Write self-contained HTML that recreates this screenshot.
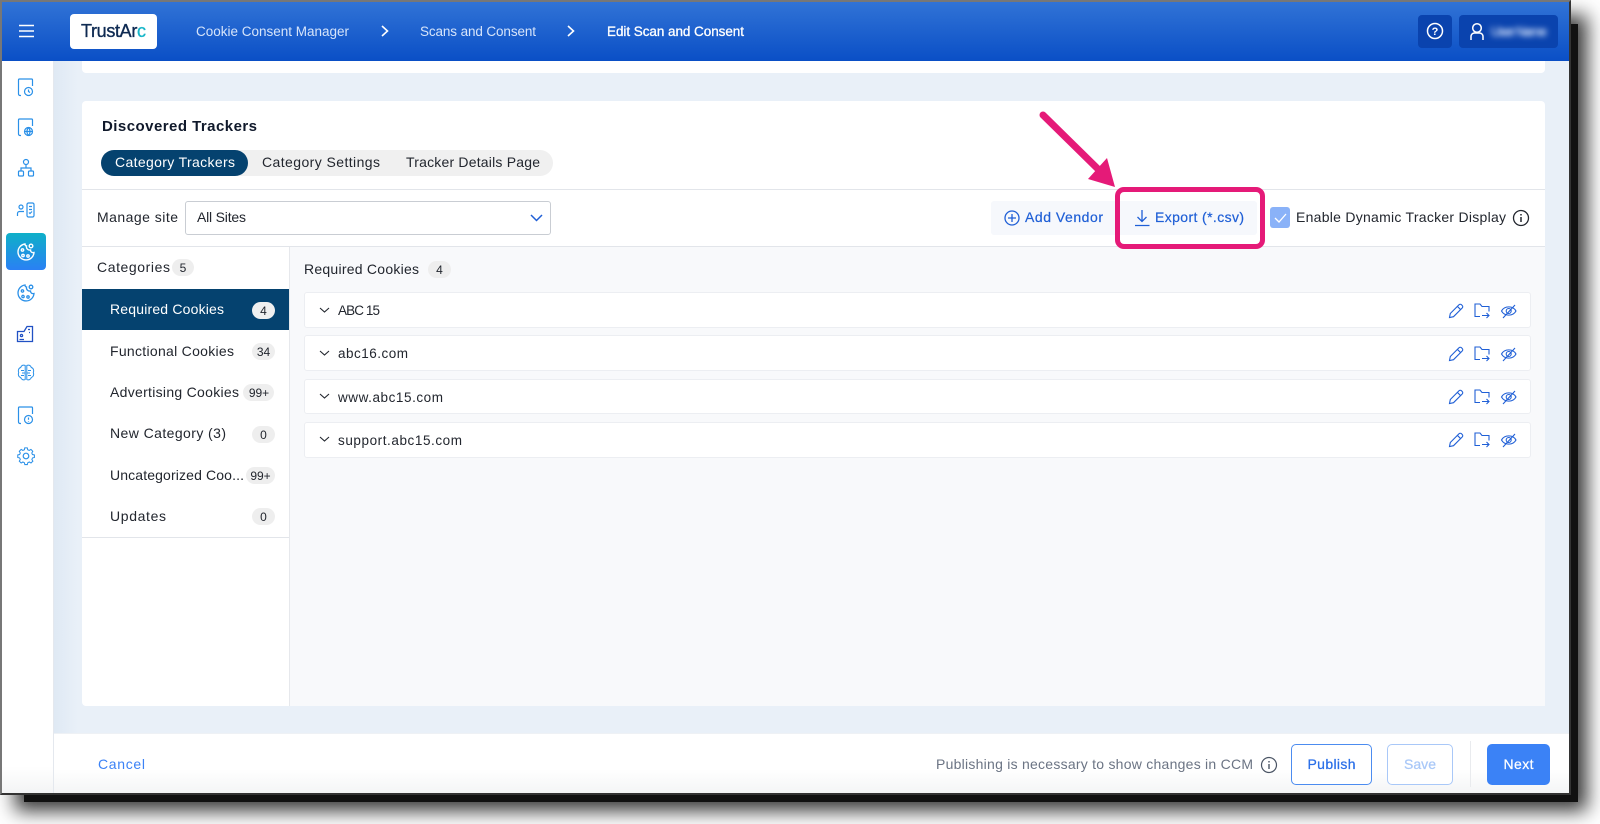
<!DOCTYPE html>
<html lang="en">
<head>
<meta charset="utf-8">
<title>Edit Scan and Consent</title>
<style>
html,body{margin:0;padding:0;background:#fff;width:1600px;height:824px;overflow:hidden}
div{position:absolute;box-sizing:border-box}
svg{position:absolute;left:0;top:0}
svg text{font-family:"Liberation Sans",sans-serif;font-size:14px;fill:#22262e}
.w{fill:#fff}
.b{fill:#1f5fd6}
.card{background:#fff;border-radius:4px}
.row{left:304px;width:1227px;background:#fff;border:1px solid #eceef2;border-radius:3px}
.pill{background:#eeeeee;border-radius:9px}
</style>
</head>
<body>
<div style="left:24px;top:24px;width:1554px;height:778px;background:#111;box-shadow:0 0 18px 9px rgba(0,0,0,.78)"></div>
<div id="win" style="left:0;top:0;width:1571px;height:795px;background:#e9f0f8;border:2px solid #777;border-right-color:#333;border-bottom-color:#333;overflow:hidden">
</div>
<div style="left:2px;top:2px;width:1567px;height:59px;background:linear-gradient(#3173d6,#0a4fc6)"></div>
<div style="left:2px;top:61px;width:52px;height:732px;background:#fff;border-right:1px solid #e4e8ee"></div>
<div style="left:54px;top:61px;width:24px;height:672px;background:linear-gradient(90deg,#dfe9f4,#e9f0f8)"></div>

<div style="left:70px;top:14px;width:87px;height:35px;background:#fff;border-radius:4px"></div>
<div style="left:1418px;top:15px;width:34px;height:33px;background:#0a43ae;border-radius:4px"></div>
<div style="left:1459px;top:15px;width:99px;height:33px;background:#0a43ae;border-radius:4px"></div>

<div style="left:6px;top:233px;width:40px;height:37px;border-radius:4px;background:linear-gradient(#0fb0c8,#2a80f4)"></div>

<div class="card" style="left:82px;top:61px;width:1463px;height:12px;border-radius:0 0 4px 4px"></div>
<div class="card" style="left:82px;top:101px;width:1463px;height:605px"></div>
<div style="left:101px;top:150px;width:452px;height:26px;background:#f0f0f0;border-radius:13px"></div>
<div style="left:101px;top:150px;width:147px;height:26px;background:#05426f;border-radius:13px"></div>
<div style="left:82px;top:189px;width:1463px;height:1px;background:#e2e5ea"></div>
<div style="left:185px;top:201px;width:366px;height:34px;background:#fff;border:1px solid #c9cdd3;border-radius:3px"></div>
<div style="left:991px;top:201px;width:266px;height:34px;background:#f6f8fc;border-radius:3px"></div>
<div style="left:1270px;top:207px;width:20px;height:21px;background:#8ab2f8;border-radius:3px"></div>
<div style="left:82px;top:246px;width:1463px;height:1px;background:#e2e5ea"></div>
<div style="left:290px;top:247px;width:1255px;height:459px;background:#f8f9fb"></div>
<div style="left:289px;top:247px;width:1px;height:459px;background:#e6e8ec"></div>
<div style="left:82px;top:289px;width:207px;height:41px;background:#05426f"></div>
<div style="left:82px;top:537px;width:207px;height:1px;background:#e2e5ea"></div>

<div class="pill" style="left:172px;top:259px;width:22px;height:17px"></div>
<div class="pill" style="left:252px;top:302px;width:23px;height:17px;background:#f0f0f0"></div>
<div class="pill" style="left:252px;top:343px;width:23px;height:17px"></div>
<div class="pill" style="left:243px;top:384px;width:31px;height:17px"></div>
<div class="pill" style="left:252px;top:426px;width:23px;height:17px"></div>
<div class="pill" style="left:246px;top:467px;width:29px;height:17px"></div>
<div class="pill" style="left:252px;top:508px;width:23px;height:17px"></div>
<div class="pill" style="left:428px;top:261px;width:23px;height:17px"></div>

<div class="row" style="top:292px;height:36px"></div>
<div class="row" style="top:335px;height:36px"></div>
<div class="row" style="top:379px;height:35px"></div>
<div class="row" style="top:422px;height:36px"></div>

<div style="left:54px;top:733px;width:1515px;height:60px;background:linear-gradient(#fff 60%,#f4f5f6);border-top:1px solid #eef1f5"></div>
<div style="left:2px;top:740px;width:52px;height:53px;background:linear-gradient(#fff 50%,#f3f4f5);border-right:1px solid #e4e8ee"></div>
<div style="left:1291px;top:744px;width:81px;height:41px;background:#fff;border:1px solid #4c8cf0;border-radius:5px"></div>
<div style="left:1387px;top:744px;width:66px;height:41px;background:#fff;border:1px solid #a9c8f8;border-radius:5px"></div>
<div style="left:1470px;top:741px;width:1px;height:46px;background:#e9ebee"></div>
<div style="left:1487px;top:744px;width:63px;height:41px;background:#3b82f6;border-radius:5px"></div>
<div style="left:1115px;top:187px;width:150px;height:62px;border:5px solid #e51a78;border-radius:9px"></div>

<svg width="1600" height="824" viewBox="0 0 1600 824" xmlns="http://www.w3.org/2000/svg">
<defs>
<filter id="bl" x="-20%" y="-100%" width="140%" height="300%"><feGaussianBlur stdDeviation="2.800"/></filter>
</defs>

<!-- hamburger -->
<path d="M19 25.500h15M19 31h15M19 36.500h15" stroke="#fff" stroke-width="1.500" fill="none"/>

<!-- logo -->
<text x="81" y="37" style="font-size:18px;fill:#0e2a52;stroke:#0e2a52;stroke-width:.35" textLength="65" lengthAdjust="spacing">Trust<tspan>Ar</tspan><tspan style="fill:#17b6c9;stroke:#17b6c9">c</tspan></text>

<!-- breadcrumb -->
<text x="196" y="36" style="font-size:13.500px;fill:#d6e4fa" textLength="153" lengthAdjust="spacing">Cookie Consent Manager</text>
<path d="M382 26l5.500 5-5.500 5" stroke="#fff" stroke-width="1.600" fill="none"/>
<text x="420" y="36" style="font-size:13.500px;fill:#d6e4fa" textLength="116" lengthAdjust="spacing">Scans and Consent</text>
<path d="M568 26l5.500 5-5.500 5" stroke="#fff" stroke-width="1.600" fill="none"/>
<text x="607" y="36" style="font-size:13.500px;fill:#fff;stroke:#fff;stroke-width:.3" textLength="137" lengthAdjust="spacing">Edit Scan and Consent</text>

<!-- help -->
<circle cx="1435" cy="31" r="7.500" fill="none" stroke="#fff" stroke-width="1.500"/>
<text x="1435" y="35" text-anchor="middle" style="font-size:11px;font-weight:bold;fill:#fff">?</text>
<!-- user -->
<circle cx="1477" cy="28" r="4.300" fill="none" stroke="#fff" stroke-width="1.500"/>
<path d="M1471 40v-3.500a3.500 3.500 0 0 1 3.500-3.500h5a3.500 3.500 0 0 1 3.500 3.500V40" fill="none" stroke="#fff" stroke-width="1.500"/>
<text x="1491" y="36" filter="url(#bl)" style="font-size:13px;fill:#c4d6f6;stroke:#c4d6f6;stroke-width:.5" textLength="56" lengthAdjust="spacing">User Name</text>

<!-- sidebar icons -->
<g fill="none" stroke="#2a90e8" stroke-width="1.200">
<g transform="translate(26 87)"><path d="M-5 8.500h-1a1.500 1.500 0 0 1-1.500-1.500V-7a1 1 0 0 1 1-1H5.500a1 1 0 0 1 1 1V-1"/><circle cx="2.500" cy="4.500" r="4"/><path d="M2.500 2.500v2l1.500 1"/></g>
<g transform="translate(26 127)"><path d="M-5 8.500h-1a1.500 1.500 0 0 1-1.500-1.500V-7a1 1 0 0 1 1-1H5.500a1 1 0 0 1 1 1V-1"/><circle cx="2.500" cy="4.500" r="4"/><path d="M-1.500 4.500h8M2.500 .5c-2 2.500-2 5.500 0 8M2.500 .5c2 2.500 2 5.500 0 8"/></g>
<g transform="translate(26 168)"><circle cx="0" cy="-6" r="2.500"/><path d="M0-3.500V0M-5 3V0H5V3"/><rect x="-7.500" y="3" width="5" height="5" rx="1"/><rect x="2.500" y="3" width="5" height="5" rx="1"/></g>
<g transform="translate(26 210)"><circle cx="-5" cy="-3" r="2"/><path d="M-8.500 6V3.500a2 2 0 0 1 2-2H-2"/><rect x="1" y="-7" width="7" height="14" rx="1.500"/><path d="M3-3.500h3M3-.5h3M3 2.500l1 1 2-2"/></g>
<g transform="translate(26 252)" stroke="#fff" stroke-width="1.400"><path d="M-1-8a8 8 0 1 0 9 8.500c-2 .5-3.500-.5-3.500-2.500-2.500 .5-4.500-1.500-4-4-1 0-1.500-1-1.500-2z"/><circle cx="-3.500" cy="-2" r="1.200"/><circle cx="-3" cy="3.500" r="1.200"/><circle cx="2" cy="4" r="1.200"/><circle cx="5" cy="-6" r="1.800"/></g>
<g transform="translate(26 293)" stroke-width="1.300"><path d="M-1-8a8 8 0 1 0 9 8.500c-2 .5-3.500-.5-3.500-2.500-2.500 .5-4.500-1.500-4-4-1 0-1.500-1-1.500-2z"/><circle cx="-3.500" cy="-2" r="1.200"/><circle cx="-3" cy="3.500" r="1.200"/><circle cx="2" cy="4" r="1.200"/><circle cx="5" cy="-6" r="1.800"/></g>
<g transform="translate(25 334)" stroke="#2151c4" stroke-width="1.300"><path d="M-7.500 7.500V-2.500H-1L2-7.500H7.500V7.500Z"/><circle cx="-3.500" cy="1.500" r="1.100"/><path d="M-5.500 5.500h4.500M3-4.500h2M4-1.500h1"/></g>
<g transform="translate(26 373)" stroke-width="1"><path d="M-.8-7.500c-2-1-4 0-4.500 2-2 .5-3 3-2 5-1 2 0 4.500 2 5 .5 2 3 3 4.500 2zM.8-7.500c2-1 4 0 4.500 2 2 .5 3 3 2 5 1 2 0 4.500-2 5-.5 2-3 3-4.500 2z"/><path d="M-5-2.500h3M-5 2.500h3M2-2.500h3M2 2.500h3M-1 0h-3M1 0h3"/></g>
<g transform="translate(26 415)"><path d="M-5 8.500h-1a1.500 1.500 0 0 1-1.500-1.500V-7a1 1 0 0 1 1-1H5.500a1 1 0 0 1 1 1V-1"/><circle cx="2.500" cy="4.500" r="4"/><path d="M2.500 2.500v2.200M2.500 6v.6"/></g>
<g transform="translate(26 456)" stroke-width="1.200"><circle r="2.800"/><path d="M-1.500-8h3l.5 2.200 1.800.8 2-1.200 2.200 2.200-1.200 2 .8 1.800 2.300.5v3l-2.200.5-.8 1.800 1.200 2-2.200 2.200-2-1.200-1.800.8-.5 2.200h-3l-.5-2.200-1.800-.8-2 1.200-2.200-2.200 1.200-2-.8-1.800-2.200-.5v-3l2.200-.5.8-1.800-1.200-2 2.200-2.200 2 1.200 1.800-.8z" transform="translate(0 -1.300) scale(.85)"/></g>
</g>

<!-- title -->
<text x="102" y="131" style="font-size:15px;font-weight:bold;fill:#10192b" textLength="155" lengthAdjust="spacing">Discovered Trackers</text>
<text x="115" y="167" class="w" textLength="120" lengthAdjust="spacing">Category Trackers</text>
<text x="262" y="167" textLength="118" lengthAdjust="spacing">Category Settings</text>
<text x="406" y="167" textLength="134" lengthAdjust="spacing">Tracker Details Page</text>

<text x="97" y="222" textLength="81" lengthAdjust="spacing">Manage site</text>
<text x="197" y="222" textLength="49" lengthAdjust="spacing">All Sites</text>
<path d="M531 215l5.500 5.500 5.500-5.500" stroke="#1f5fd6" stroke-width="1.500" fill="none"/>

<!-- add vendor / export -->
<circle cx="1012" cy="218" r="7" fill="none" stroke="#1f5fd6" stroke-width="1.300"/>
<path d="M1012 214v8M1008 218h8" stroke="#1f5fd6" stroke-width="1.300" fill="none"/>
<text x="1025" y="222" class="b" style="stroke:#1f5fd6;stroke-width:.2" textLength="78" lengthAdjust="spacing">Add Vendor</text>
<path d="M1142 210v11M1137.500 217l4.500 4.500 4.500-4.500M1135 225.500h14.500" stroke="#1f5fd6" stroke-width="1.300" fill="none"/>
<text x="1155" y="222" class="b" style="stroke:#1f5fd6;stroke-width:.2" textLength="89" lengthAdjust="spacing">Export (*.csv)</text>
<path d="M1275 218l4 4 7-8" stroke="#fff" stroke-width="1.300" fill="none"/>
<text x="1296" y="222" textLength="210" lengthAdjust="spacing">Enable Dynamic Tracker Display</text>
<circle cx="1521" cy="218" r="7.500" fill="none" stroke="#22262e" stroke-width="1.300"/>
<path d="M1521 217v5M1521 214v1.500" stroke="#22262e" stroke-width="1.500" fill="none"/>

<!-- arrow -->
<path d="M1043 115L1100 171" stroke="#e51a78" stroke-width="7" stroke-linecap="round" fill="none"/>
<path d="M1107 158L1088 179L1115 187Z" fill="#e51a78"/>

<!-- categories -->
<text x="97" y="272" textLength="73" lengthAdjust="spacing">Categories</text>
<text x="183" y="272" text-anchor="middle" style="font-size:12px">5</text>
<text x="110" y="314" class="w" textLength="114" lengthAdjust="spacing">Required Cookies</text>
<text x="263.500" y="315" text-anchor="middle" style="font-size:12px">4</text>
<text x="110" y="356" textLength="124" lengthAdjust="spacing">Functional Cookies</text>
<text x="263.500" y="356" text-anchor="middle" style="font-size:12px">34</text>
<text x="110" y="397" textLength="129" lengthAdjust="spacing">Advertising Cookies</text>
<text x="259" y="397" text-anchor="middle" style="font-size:12px">99+</text>
<text x="110" y="438" textLength="116" lengthAdjust="spacing">New Category (3)</text>
<text x="263.500" y="439" text-anchor="middle" style="font-size:12px">0</text>
<text x="110" y="480" textLength="134" lengthAdjust="spacing">Uncategorized Coo...</text>
<text x="260.500" y="480" text-anchor="middle" style="font-size:12px">99+</text>
<text x="110" y="521" textLength="56" lengthAdjust="spacing">Updates</text>
<text x="263.500" y="521" text-anchor="middle" style="font-size:12px">0</text>

<!-- right list -->
<text x="304" y="274" textLength="115" lengthAdjust="spacing">Required Cookies</text>
<text x="439.500" y="274" text-anchor="middle" style="font-size:12px">4</text>

<g fill="none" stroke="#22262e" stroke-width="1.100">
<path d="M320 308l4.500 4 4.500-4"/><path d="M320 351l4.500 4 4.500-4"/><path d="M320 394l4.500 4 4.500-4"/><path d="M320 437l4.500 4 4.500-4"/>
</g>
<text x="338" y="315" style="font-size:13.500px" textLength="42" lengthAdjust="spacing">ABC 15</text>
<text x="338" y="358" style="font-size:13.500px" textLength="70" lengthAdjust="spacing">abc16.com</text>
<text x="338" y="402" style="font-size:13.500px" textLength="105" lengthAdjust="spacing">www.abc15.com</text>
<text x="338" y="445" style="font-size:13.500px" textLength="124" lengthAdjust="spacing">support.abc15.com</text>

<!-- row icons -->
<g fill="none" stroke="#1f5fd6" stroke-width="1.100" transform="translate(-1 0)">
<g>
<path d="M1450.500 317.500l.8-4 8.700-8.700a1.700 1.700 0 0 1 2.500 0l.7 .7a1.700 1.700 0 0 1 0 2.500l-8.700 8.700zM1458.500 306.500l3.200 3.200"/>
<path d="M1481 316.500h-5v-12.500h5l2 2.500h7v5M1483 315.500h7M1487.500 313l2.500 2.500-2.500 2.500"/>
<path d="M1502.500 311c3-5.500 11.500-5.500 14.500 0-3 5.500-11.500 5.500-14.500 0zM1504 318l12-13"/><circle cx="1509.700" cy="311" r="2.500"/>
</g>
<g transform="translate(0 43)">
<path d="M1450.500 317.500l.8-4 8.700-8.700a1.700 1.700 0 0 1 2.500 0l.7 .7a1.700 1.700 0 0 1 0 2.500l-8.700 8.700zM1458.500 306.500l3.200 3.200"/>
<path d="M1481 316.500h-5v-12.500h5l2 2.500h7v5M1483 315.500h7M1487.500 313l2.500 2.500-2.500 2.500"/>
<path d="M1502.500 311c3-5.500 11.500-5.500 14.500 0-3 5.500-11.500 5.500-14.500 0zM1504 318l12-13"/><circle cx="1509.700" cy="311" r="2.500"/>
</g>
<g transform="translate(0 86)">
<path d="M1450.500 317.500l.8-4 8.700-8.700a1.700 1.700 0 0 1 2.500 0l.7 .7a1.700 1.700 0 0 1 0 2.500l-8.700 8.700zM1458.500 306.500l3.200 3.200"/>
<path d="M1481 316.500h-5v-12.500h5l2 2.500h7v5M1483 315.500h7M1487.500 313l2.500 2.500-2.500 2.500"/>
<path d="M1502.500 311c3-5.500 11.500-5.500 14.500 0-3 5.500-11.500 5.500-14.500 0zM1504 318l12-13"/><circle cx="1509.700" cy="311" r="2.500"/>
</g>
<g transform="translate(0 129)">
<path d="M1450.500 317.500l.8-4 8.700-8.700a1.700 1.700 0 0 1 2.500 0l.7 .7a1.700 1.700 0 0 1 0 2.500l-8.700 8.700zM1458.500 306.500l3.200 3.200"/>
<path d="M1481 316.500h-5v-12.500h5l2 2.500h7v5M1483 315.500h7M1487.500 313l2.500 2.500-2.500 2.500"/>
<path d="M1502.500 311c3-5.500 11.500-5.500 14.500 0-3 5.500-11.500 5.500-14.500 0zM1504 318l12-13"/><circle cx="1509.700" cy="311" r="2.500"/>
</g>
</g>

<!-- footer -->
<text x="98" y="769" style="fill:#3b82f6" textLength="47" lengthAdjust="spacing">Cancel</text>
<text x="936" y="769" style="fill:#6b7484" textLength="317" lengthAdjust="spacing">Publishing is necessary to show changes in CCM</text>
<circle cx="1269" cy="765" r="7.500" fill="none" stroke="#4b5565" stroke-width="1.200"/>
<path d="M1269 764v5M1269 761v1.500" stroke="#4b5565" stroke-width="1.400" fill="none"/>
<text x="1331.500" y="769" text-anchor="middle" style="fill:#2a6fe8;stroke:#2a6fe8;stroke-width:.25" textLength="48" lengthAdjust="spacing">Publish</text>
<text x="1420" y="769" text-anchor="middle" style="fill:#a9c8f8;stroke:#a9c8f8;stroke-width:.25" textLength="32" lengthAdjust="spacing">Save</text>
<text x="1518.500" y="769" text-anchor="middle" style="fill:#fff;stroke:#fff;stroke-width:.25" textLength="30" lengthAdjust="spacing">Next</text>
</svg>
</body>
</html>
